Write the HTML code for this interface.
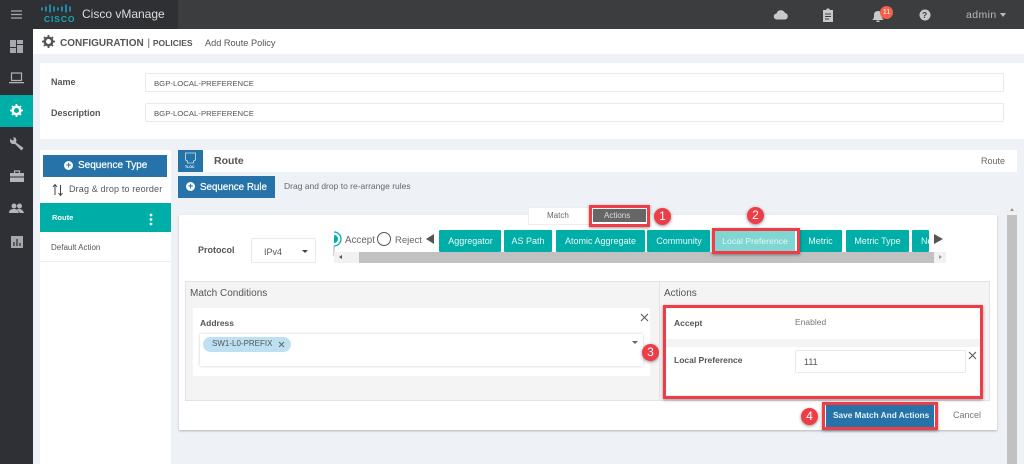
<!DOCTYPE html>
<html><head><meta charset="utf-8"><style>
html,body{margin:0;padding:0}
html{background:#eef1f6}
body{width:1024px;height:464px;position:relative;overflow:hidden;background:#eef1f6;font-family:"Liberation Sans",sans-serif;color:#555;filter:blur(.3px)}
.a,svg.a{position:absolute;box-sizing:border-box}
.t{position:absolute;white-space:nowrap;line-height:1}
.tab{position:absolute;box-sizing:border-box;top:230px;height:22px;background:#00aea8;color:#e6f7f6;font-size:9px;text-align:center;line-height:23px;border-radius:1px;white-space:nowrap;overflow:hidden}
.red{position:absolute;box-sizing:border-box;border:3px solid #ee3d47;box-shadow:0 1px 3px rgba(0,0,0,.4)}
.n{position:absolute;width:17px;height:17px;border-radius:50%;background:#ee3d47;color:#fff;font-size:12px;line-height:17px;text-align:center;box-shadow:0 1px 3px rgba(0,0,0,.45)}
.inp{position:absolute;box-sizing:border-box;background:#fff;border:1px solid #e9e9e9;border-radius:2px;font-size:9px;color:#555}
</style></head><body>
<!-- header -->
<div class="a" style="left:0;top:0;width:1024px;height:29px;background:#3c3d3f"></div>
<div class="a" style="left:0;top:0;width:178px;height:29px;background:#2f3033"></div>
<div class="a" style="left:0;top:29px;width:33px;height:435px;background:#2f3035"></div>
<svg class="a" style="left:10px;top:10px" width="13" height="9"><path d="M1 1h11M1 4.500h11M1 8h11" stroke="#aaa" stroke-width="1.300"/></svg>
<svg class="a" style="left:40px;top:3px" width="34" height="12"><path d="M2 4.500v3M6 3.500v5M10 1.500v8M14 3.500v5M18 4.500v3M22 3.500v5M26 1.500v8M30 3.500v5" stroke="#1ba6c8" stroke-width="1.500" fill="none"/></svg>
<div class="t" style="left:44px;top:15px;font-size:8.500px;font-weight:bold;color:#1ba6b8;letter-spacing:.9px">CISCO</div>
<div class="t" style="left:82px;top:8px;font-size:12px;color:#ddd">Cisco vManage</div>
<svg class="a" style="left:773px;top:9px" width="16" height="11"><path d="M4 10.500a3 3 0 0 1-.5-6A4.500 4.500 0 0 1 12 4a3.300 3.300 0 0 1 0 6.500z" fill="#c9c9c9"/></svg>
<svg class="a" style="left:822px;top:8px" width="12" height="14"><path d="M1 2h3l1-1.500h2L8 2h3v12H1z" fill="#c9c9c9"/><path d="M3 6h6M3 8.500h6M3 11h4" stroke="#3c3d3f"/></svg>
<svg class="a" style="left:871px;top:9px" width="14" height="13"><path d="M1 11c2-1 2-3 2-5s1-4 4-4 4 2 4 4 0 4 2 5z" fill="#c9c9c9"/><rect x="5.500" y="11.500" width="3" height="1.500" fill="#c9c9c9"/></svg>
<div class="a" style="left:880px;top:6px;width:13px;height:13px;border-radius:50%;background:#f4604c;color:#fff;font-size:7px;line-height:13px;text-align:center">11</div>
<svg class="a" style="left:919px;top:9px" width="12" height="12"><circle cx="6" cy="6" r="5.500" fill="#c9c9c9"/></svg>
<div class="t" style="left:922px;top:11px;font-size:8.500px;font-weight:bold;color:#3c3d3f">?</div>
<div class="t" style="left:966px;top:10px;font-size:10.500px;color:#bbb;letter-spacing:.4px">admin</div>
<div class="a" style="left:1000px;top:13px;border:3px solid transparent;border-top:4px solid #bbb"></div>
<!-- sidebar -->
<svg class="a" style="left:10px;top:40px" width="13" height="13"><path d="M0 0h6v7H0zM7 0h6v4H7zM0 8h6v5H0zM7 5h6v8H7z" fill="#a8a8a8"/></svg>
<svg class="a" style="left:9px;top:72px" width="15" height="12"><path d="M2.500 1h10v7.500h-10z" fill="none" stroke="#b0b0b0" stroke-width="1.200"/><path d="M0 10h15v1.300H0z" fill="#b0b0b0"/></svg>
<div class="a" style="left:0;top:95px;width:33px;height:32px;background:#00aea8"></div>
<svg class="a" style="left:10px;top:104px" width="13" height="13" viewBox="0 0 13 13"><circle cx="6.500" cy="6.500" r="3.800" fill="none" stroke="#fff" stroke-width="2.500"/><path d="M6.500 0v13M0 6.500h13M2 2l9 9M11 2l-9 9" stroke="#fff" stroke-width="1.800" stroke-dasharray="2 9 2 0"/></svg>
<svg class="a" style="left:9px;top:136px" width="15" height="15"><path d="M1 2.500L3 4.500 5 3.500 4 1.500 6.500 1.500 7.500 4 7 6.500 14.500 12 12.500 14.500 6 8 3 8 1 6z" fill="#b5b5b5"/></svg>
<svg class="a" style="left:10px;top:170px" width="14" height="12"><path d="M0 3h14v9H0z" fill="#b5b5b5"/><path d="M4.500 3V1h5v2" fill="none" stroke="#b5b5b5" stroke-width="1.200"/><path d="M0 7h14" stroke="#2f3035"/></svg>
<svg class="a" style="left:9px;top:203px" width="15" height="11"><circle cx="5" cy="3" r="2.500" fill="#b5b5b5"/><circle cx="10.500" cy="3" r="2.500" fill="#b5b5b5"/><path d="M0 10c0-3 2-4 5-4s4 1 5 4zM8 6c3-.5 6 .5 7 4h-4z" fill="#b5b5b5"/></svg>
<svg class="a" style="left:11px;top:236px" width="12" height="12"><path d="M0 0h12v12H0z" fill="#a8a8a8"/><path d="M3 6v4M6 3v7M9 7v3" stroke="#2f3035" stroke-width="1.300"/></svg>
<!-- title bar -->
<div class="a" style="left:33px;top:29px;width:991px;height:25px;background:#fff"></div>
<svg class="a" style="left:42px;top:35px" width="13" height="13" viewBox="0 0 13 13"><circle cx="6.500" cy="6.500" r="3.800" fill="none" stroke="#555" stroke-width="2.500"/><path d="M6.500 0v13M0 6.500h13M2 2l9 9M11 2l-9 9" stroke="#555" stroke-width="1.800" stroke-dasharray="2 9 2 0"/></svg>
<div class="t" style="left:60px;top:38px;font-size:10px;font-weight:bold;color:#555;line-height:11px">CONFIGURATION <span style="font-weight:normal;margin-left:1px">|</span> <span style="font-size:8.500px">POLICIES</span></div>
<div class="t" style="left:205px;top:39px;font-size:9.200px;color:#555">Add Route Policy</div>
<!-- name panel -->
<div class="a" style="left:40px;top:63px;width:984px;height:76px;background:#fff"></div>
<div class="t" style="left:51px;top:78px;font-size:9px;font-weight:bold;color:#555">Name</div>
<div class="t" style="left:51px;top:109px;font-size:9px;font-weight:bold;color:#555">Description</div>
<div class="inp" style="left:145px;top:73px;width:859px;height:19px;padding:5px 8px;font-size:7.750px;line-height:10px">BGP-LOCAL-PREFERENCE</div>
<div class="inp" style="left:145px;top:103px;width:859px;height:19px;padding:5px 8px;font-size:7.750px;line-height:10px">BGP-LOCAL-PREFERENCE</div>
<!-- left list -->
<div class="a" style="left:40px;top:150px;width:131px;height:314px;background:#fff"></div>
<div class="a" style="left:43px;top:155px;width:124px;height:22px;background:#2673aa"></div>
<div class="a" style="left:64px;top:161px;width:9px;height:9px;border-radius:50%;background:#fff"></div>
<div class="t" style="left:66px;top:161px;font-size:9px;color:#2673aa;line-height:9px;font-weight:bold">+</div>
<div class="t" style="left:78px;top:160px;font-size:10px;line-height:11px;color:#fff;-webkit-text-stroke:.2px #fff">Sequence Type</div>
<svg class="a" style="left:52px;top:183px" width="12" height="14"><path d="M3 12V2M1 4l2-2.500L5 4M8.500 2v10M6.500 10l2 2.500 2-2.500" fill="none" stroke="#444" stroke-width="1"/></svg>
<div class="t" style="left:69px;top:185px;font-size:9px;color:#555;letter-spacing:.15px">Drag &amp; drop to reorder</div>
<div class="a" style="left:40px;top:203px;width:131px;height:29px;background:#00aea8"></div>
<div class="t" style="left:52px;top:214px;font-size:7.500px;font-weight:bold;color:#fff">Route</div>
<svg class="a" style="left:148px;top:213px" width="6" height="13"><circle cx="3" cy="2" r="1.400" fill="#fff"/><circle cx="3" cy="6.500" r="1.400" fill="#fff"/><circle cx="3" cy="11" r="1.400" fill="#fff"/></svg>
<div class="t" style="left:51px;top:244px;font-size:8px;color:#555">Default Action</div>
<div class="a" style="left:40px;top:261px;width:131px;height:1px;background:#eee"></div>
<!-- route header -->
<div class="a" style="left:178px;top:150px;width:839px;height:22px;background:#fff"></div>
<div class="a" style="left:178px;top:150px;width:25px;height:22px;background:#2673aa"></div>
<svg class="a" style="left:184px;top:152px" width="13" height="13"><path d="M1.500 1h10v7l-2 1v2h-6V9l-2-1z" fill="none" stroke="#cfe0ee" stroke-width=".8"/></svg>
<div class="t" style="left:185px;top:166px;font-size:3.500px;color:#fff;font-weight:bold">TLOC</div>
<div class="t" style="left:214px;top:155px;font-size:10.500px;font-weight:bold;color:#555;line-height:12px">Route</div>
<div class="t" style="left:981px;top:156px;font-size:9px;color:#666;line-height:10px">Route</div>
<div class="a" style="left:178px;top:176px;width:97px;height:22px;background:#2673aa"></div>
<div class="a" style="left:186px;top:182px;width:9px;height:9px;border-radius:50%;background:#fff"></div>
<div class="t" style="left:188px;top:182px;font-size:9px;color:#2673aa;line-height:9px;font-weight:bold">+</div>
<div class="t" style="left:200px;top:182px;font-size:9.800px;line-height:11px;color:#fff;-webkit-text-stroke:.2px #fff">Sequence Rule</div>
<div class="t" style="left:284px;top:182px;font-size:8.500px;color:#666">Drag and drop to re-arrange rules</div>
<!-- main panel -->
<div class="a" style="left:179px;top:215px;width:818px;height:215px;background:#fff;box-shadow:0 1px 2px rgba(0,0,0,.25)"></div>
<div class="a" style="left:528px;top:207px;width:62px;height:18px;background:#fff;border:1px solid #eee"></div>
<div class="t" style="left:547px;top:212px;font-size:8px;color:#666">Match</div>
<div class="a" style="left:593px;top:209px;width:53px;height:13px;background:#666"></div>
<div class="t" style="left:604px;top:212px;font-size:8px;color:#ddd">Actions</div>
<div class="red" style="left:589px;top:205px;width:61px;height:22px"></div>
<div class="n" style="left:654px;top:208px">1</div>
<!-- protocol -->
<div class="t" style="left:198px;top:246px;font-size:9px;font-weight:bold;color:#555">Protocol</div>
<div class="inp" style="left:251px;top:238px;width:65px;height:25px;padding:9px 12px;line-height:9px">IPv4</div>
<div class="a" style="left:302px;top:250px;border:3px solid transparent;border-top:3px solid #444"></div>
<!-- radios -->
<svg class="a" style="left:330px;top:230px" width="14" height="26"><path d="M4 2a7 7 0 0 1 0 14" fill="none" stroke="#00aea8" stroke-width="1.300"/><path d="M4 5a4 4 0 0 1 0 8z" fill="#00aea8"/><path d="M4 16v10" stroke="#aaa"/></svg>
<div class="t" style="left:345px;top:236px;font-size:9.800px;color:#666">Accept</div>
<div class="a" style="left:377px;top:232px;width:14px;height:14px;border-radius:50%;border:1.500px solid #555"></div>
<div class="t" style="left:395px;top:236px;font-size:9.500px;color:#666">Reject</div>
<div class="a" style="left:426px;top:234px;border:5px solid transparent;border-right:8px solid #555;border-left:0"></div>
<!-- tabs -->
<div class="tab" style="left:439px;width:62px;padding-left:1px">Aggregator</div>
<div class="tab" style="left:504px;width:48px">AS Path</div>
<div class="tab" style="left:556px;width:89px">Atomic Aggregate</div>
<div class="tab" style="left:647px;width:63px;padding-left:1px">Community</div>
<div class="tab" style="left:715px;width:80px;background:#7fd6d3;font-size:8.700px">Local Preference</div>
<div class="tab" style="left:799px;width:43px">Metric</div>
<div class="tab" style="left:846px;width:63px">Metric Type</div>
<div class="tab" style="left:912px;width:17px;text-align:left;padding-left:9px">Next Hop</div>
<div class="a" style="left:934px;top:234px;border:5.500px solid transparent;border-left:9px solid #555;border-right:0"></div>
<!-- scrollbar h -->
<div class="a" style="left:334px;top:252px;width:612px;height:11px;background:#f1f1f1"></div>
<div class="a" style="left:359px;top:252px;width:575px;height:11px;background:#c1c1c1"></div>
<div class="a" style="left:339px;top:255px;border:2.500px solid transparent;border-right:3px solid #555;border-left:0"></div>
<div class="a" style="left:939px;top:255px;border:2.500px solid transparent;border-left:3px solid #999;border-right:0"></div>
<div class="red" style="left:712px;top:228px;width:88px;height:26px"></div>
<div class="n" style="left:747px;top:207px">2</div>
<!-- Match conditions -->
<div class="a" style="left:185px;top:281px;width:475px;height:120px;background:#f4f4f4;border:1px solid #e3e3e3"></div>
<div class="t" style="left:190px;top:288px;font-size:10px;color:#555;line-height:11px">Match Conditions</div>
<div class="a" style="left:193px;top:308px;width:457px;height:68px;background:#fff"></div>
<div class="t" style="left:200px;top:319px;font-size:8.500px;font-weight:bold;color:#555">Address</div>
<svg class="a" style="left:640px;top:313px" width="9" height="9"><path d="M1 1l7 7M8 1l-7 7" stroke="#555"/></svg>
<div class="a" style="left:200px;top:334px;width:443px;height:32px;background:#fff;box-shadow:0 0 3px rgba(0,0,0,.2)"></div>
<div class="a" style="left:203px;top:337px;width:88px;height:15px;background:#bde0f2;border-radius:8px"></div>
<div class="t" style="left:212px;top:340px;font-size:8px;color:#555">SW1-L0-PREFIX</div>
<svg class="a" style="left:278px;top:341px" width="7" height="7"><path d="M1 1l5 5M6 1l-5 5" stroke="#666"/></svg>
<div class="a" style="left:632px;top:341px;border:3px solid transparent;border-top:3px solid #666"></div>
<div class="n" style="left:642px;top:344px">3</div>
<!-- Actions -->
<div class="a" style="left:659px;top:281px;width:331px;height:120px;background:#f4f4f4;border:1px solid #e3e3e3"></div>
<div class="t" style="left:664px;top:288px;font-size:10px;color:#555;line-height:11px">Actions</div>
<div class="a" style="left:666px;top:308px;width:314px;height:31px;background:#fff"></div>
<div class="a" style="left:666px;top:347px;width:314px;height:48px;background:#fff"></div>
<div class="t" style="left:674px;top:319px;font-size:8.500px;font-weight:bold;color:#555">Accept</div>
<div class="t" style="left:795px;top:318px;font-size:8.500px;color:#777">Enabled</div>
<div class="t" style="left:674px;top:356px;font-size:8.500px;font-weight:bold;color:#555">Local Preference</div>
<div class="inp" style="left:795px;top:350px;width:171px;height:23px;padding:6px 8px;line-height:10px">111</div>
<svg class="a" style="left:968px;top:351px" width="9" height="9"><path d="M1 1l7 7M8 1l-7 7" stroke="#555"/></svg>
<div class="red" style="left:663px;top:305px;width:320px;height:94px"></div>
<!-- Save -->
<div class="a" style="left:826px;top:405px;width:108px;height:22px;background:#2673aa"></div>
<div class="t" style="left:833px;top:411px;font-size:8.300px;font-weight:bold;color:#e8f0f6">Save Match And Actions</div>
<div class="red" style="left:822px;top:402px;width:116px;height:28px"></div>
<div class="n" style="left:801px;top:408px">4</div>
<div class="t" style="left:953px;top:411px;font-size:9px;color:#777">Cancel</div>
<!-- scrollbar v -->
<div class="a" style="left:1007px;top:205px;width:10px;height:259px;background:#c1c1c1"></div>
<div class="a" style="left:1007px;top:205px;width:10px;height:10px;background:#f1f1f1"></div>
<div class="a" style="left:1010px;top:208px;border:2.500px solid transparent;border-bottom:3px solid #999;border-top:0"></div>
</body></html>
